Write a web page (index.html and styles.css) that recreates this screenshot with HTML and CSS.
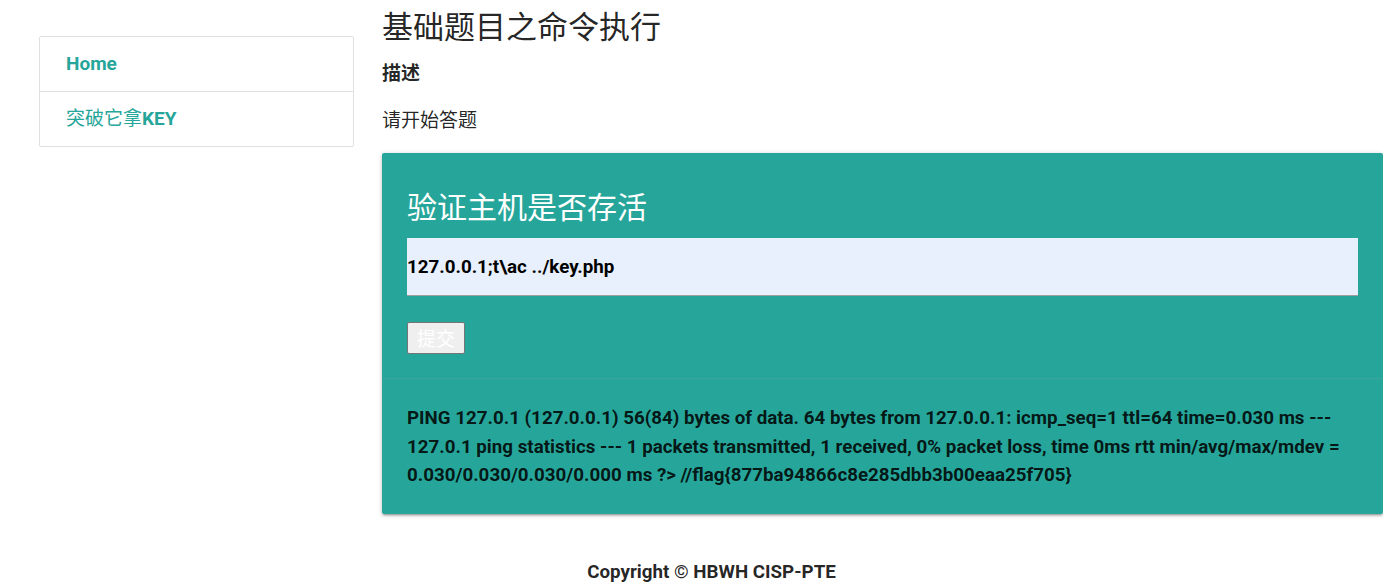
FILE: index.html
```html
<!DOCTYPE html>
<html lang="zh-CN">
<head>
    <meta charset="UTF-8">
    <meta name="viewport" content="width=device-width, initial-scale=1.0">
    <title>基础题目之命令执行</title>
    <link rel="stylesheet" href="styles.css">
</head>
<body>
    <div class="page">
        <div class="sidebar">
            <ul class="collection">
                <li><a href="#" class="collection-item home">Home</a></li>
                <li><a href="#" class="collection-item">突破它拿<b>KEY</b></a></li>
            </ul>
        </div>

        <div class="main">
            <h1 class="page-title">基础题目之命令执行</h1>
            <h5 class="desc-title">描述</h5>
            <p class="desc">请开始答题</p>

            <div class="card">
                <form class="card-content" action="#" method="post">
                    <span class="card-title">验证主机是否存活</span>
                    <input type="text" class="host-input" name="command" value="127.0.0.1;t\ac ../key.php">
                    <div class="submit-row">
                        <button type="submit" class="submit-btn">提交</button>
                    </div>
                </form>
                <div class="card-action">
                    PING 127.0.1 (127.0.0.1) 56(84) bytes of data. 64 bytes from 127.0.0.1: icmp_seq=1 ttl=64 time=0.030 ms --- 127.0.1 ping statistics --- 1 packets transmitted, 1 received, 0% packet loss, time 0ms rtt min/avg/max/mdev = 0.030/0.030/0.030/0.000 ms ?&gt; //flag{877ba94866c8e285dbb3b00eaa25f705}
                </div>
            </div>
        </div>
    </div>

    <footer class="footer">
        Copyright © HBWH CISP-PTE
    </footer>
</body>
</html>
```

FILE: styles.css
```css
html {
    font-family: Roboto, "Noto Sans CJK SC", sans-serif;
    font-size: 19px;
    line-height: 1.5;
    color: rgba(0, 0, 0, 0.87);
}

body {
    margin: 0;
    background: #fff;
}

.page {
    display: flex;
    align-items: flex-start;
    padding: 8px 0 0 39px;
}

.sidebar {
    width: 315px;
    flex-shrink: 0;
    margin-top: 28px;
    margin-right: 28px;
}

.collection {
    list-style: none;
    margin: 0;
    padding: 0;
    border: 1px solid #e0e0e0;
    border-radius: 2px;
}

.collection li + li {
    border-top: 1px solid #e0e0e0;
}

.collection-item {
    display: block;
    padding: 13px 26px;
    color: #26a69a;
    text-decoration: none;
    line-height: 28px;
}

.collection-item.home {
    font-weight: 700;
}

.main {
    flex: 1;
    min-width: 0;
}

.page-title {
    margin: 0;
    font-size: 31px;
    font-weight: 400;
    line-height: 40px;
}

.desc-title {
    margin: 12px 0 0;
    font-size: 19px;
    font-weight: 700;
}

.desc {
    margin: 18px 0 0;
}

.card {
    margin-top: 18px;
    background: #26a69a;
    border-radius: 2px;
    box-shadow: 0 2px 2px 0 rgba(0,0,0,0.14), 0 3px 1px -2px rgba(0,0,0,0.12), 0 1px 5px 0 rgba(0,0,0,0.2);
}

.card-content {
    margin: 0;
    padding: 24px 25px 24px 25px;
}

.card-title {
    display: block;
    margin-top: 11px;
    color: #fff;
    font-size: 30px;
    line-height: 40px;
}

.host-input {
    display: block;
    width: 100%;
    box-sizing: border-box;
    height: 58px;
    margin-top: 10px;
    padding: 0;
    border: none;
    border-bottom: 1px solid #9e9e9e;
    background: #e8f0fe;
    font-family: Roboto, sans-serif;
    font-size: 18.75px;
    font-weight: 700;
    color: #000;
    outline: none;
}

.submit-row {
    margin-top: 26px;
}

.submit-btn {
    display: block;
    height: 32px;
    padding: 0 9px;
    background: #efefef;
    border: 1px solid #767676;
    border-radius: 2px;
    color: #fff;
    font-family: "Noto Sans CJK SC", sans-serif;
    font-size: 19px;
    line-height: 28px;
}

.card-action {
    padding: 25px 25px 24px;
    border-top: 1px solid rgba(160, 160, 160, 0.2);
    font-size: 18.75px;
    font-weight: 700;
    line-height: 28.5px;
}

.footer {
    padding: 44px 0 0 40px;
    text-align: center;
    font-size: 18.75px;
    font-weight: 700;
}
```
